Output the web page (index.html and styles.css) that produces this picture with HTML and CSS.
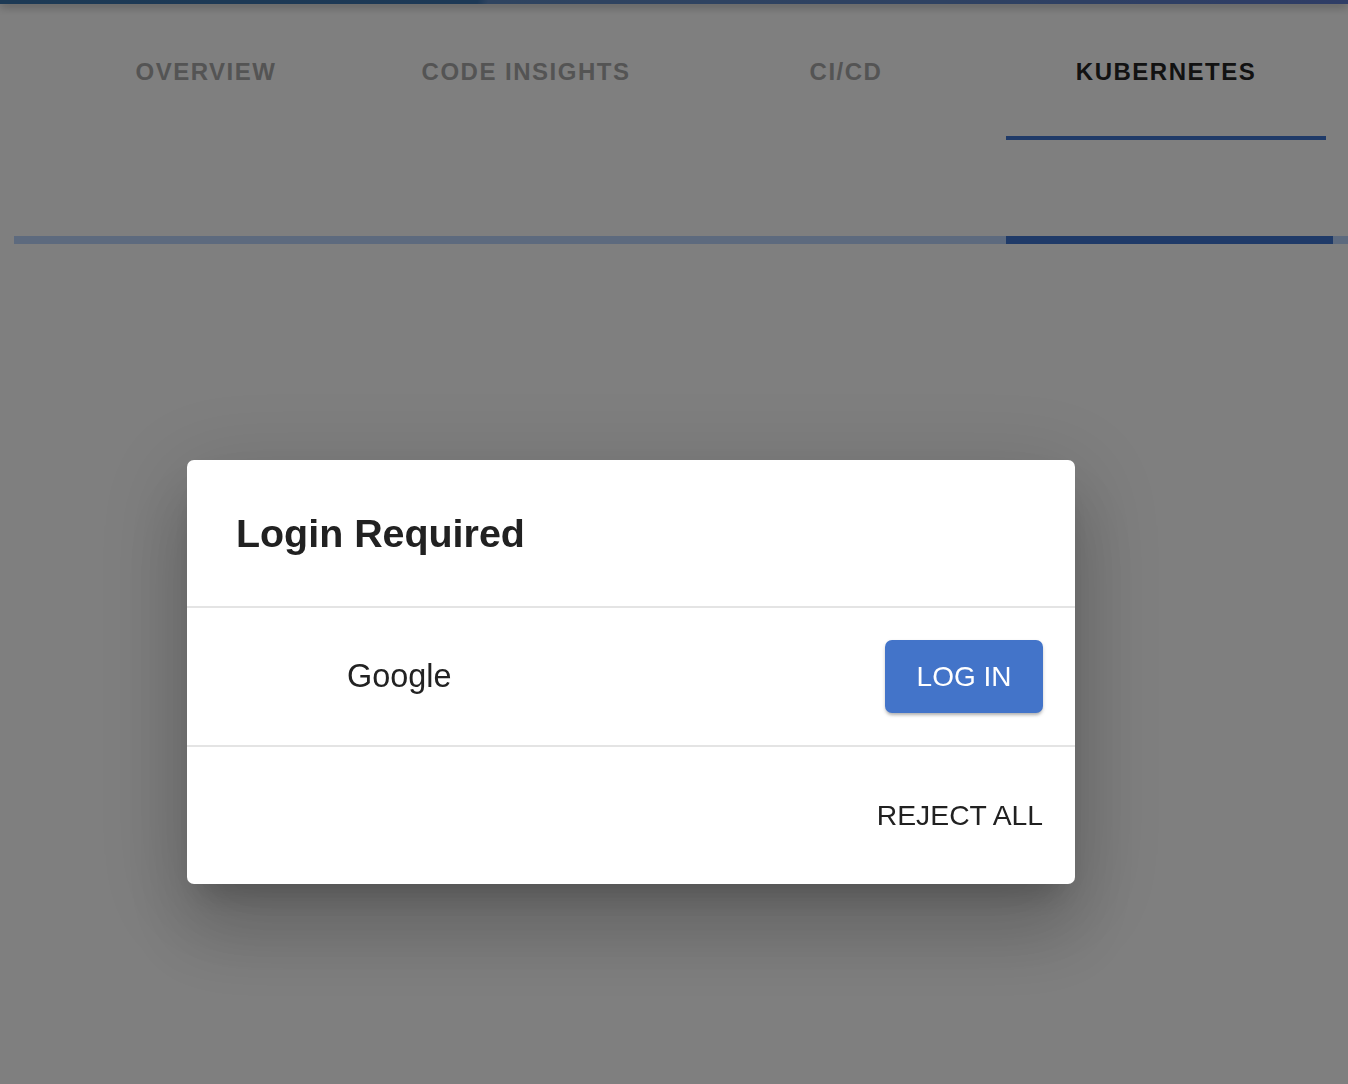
FILE: index.html
```html
<!DOCTYPE html>
<html lang="en">
<head>
<meta charset="utf-8">
<title>Login Required</title>
<link rel="stylesheet" href="styles.css">
</head>
<body>
<div class="page">
  <div class="topbar"></div>
  <nav class="tabs">
    <div class="tab">OVERVIEW</div>
    <div class="tab">CODE INSIGHTS</div>
    <div class="tab">CI/CD</div>
    <div class="tab active">KUBERNETES</div>
  </nav>
  <div class="progress">
    <div class="seg seg-a"></div>
    <div class="seg seg-dark"></div>
    <div class="seg seg-b"></div>
  </div>
</div>
<div class="overlay">
  <div class="dialog" role="dialog">
    <div class="dialog-title">Login Required</div>
    <div class="dialog-row">
      <span class="provider">Google</span>
      <button class="btn-primary">LOG IN</button>
    </div>
    <div class="dialog-actions">
      <button class="btn-text">REJECT ALL</button>
    </div>
  </div>
</div>
</body>
</html>
```

FILE: styles.css
```css
html, body {
  margin: 0;
  padding: 0;
  background: #ffffff;
  font-family: "Liberation Sans", Arial, sans-serif;
}

.page {
  height: 1084px;
  overflow: hidden;
}

.topbar {
  height: 4px;
  background: linear-gradient(100deg, #3a74aa 0%, #3a72ac 35.4%, #5e88c0 36.2%, #5e84c4 70%, #5e7acc 100%);
  box-shadow: 0 2px 10px rgba(0, 0, 0, 0.45);
  position: relative;
}

.tabs {
  display: flex;
  padding-left: 46px;
}

.tab {
  width: 320px;
  height: 128px;
  display: flex;
  align-items: center;
  justify-content: center;
  padding-top: 4px;
  box-sizing: content-box;
  border-bottom: 4px solid transparent;
  font-size: 24px;
  font-weight: 700;
  letter-spacing: 1.5px;
  color: #a9a9a9;
}

.tab.active {
  color: #252525;
  border-bottom-color: #3e74d0;
}

.progress {
  display: flex;
  height: 8px;
  margin-top: 96px;
  margin-left: 14px;
}

.seg-a {
  width: 992px;
  background: #bad4fc;
}

.seg-dark {
  width: 327px;
  background: #3e74d0;
}

.seg-b {
  flex: 1;
  background: #bad4fc;
}

.overlay {
  position: fixed;
  inset: 0;
  z-index: 10;
  background: rgba(0, 0, 0, 0.5);
  display: flex;
  align-items: flex-start;
  padding: 460px 0 0 187px;
}

.dialog {
  width: 888px;
  background: #ffffff;
  border-radius: 7px;
  box-shadow: 0 22px 30px -14px rgba(0, 0, 0, 0.2),
              0 48px 76px 6px rgba(0, 0, 0, 0.14),
              0 18px 92px 16px rgba(0, 0, 0, 0.12);
  color: #212121;
}

.dialog-title {
  padding: 50px 47px 49px 49px;
  font-size: 39.4px;
  line-height: 47px;
  font-weight: 700;
  border-bottom: 2px solid #e4e4e4;
}

.dialog-row {
  display: flex;
  align-items: center;
  justify-content: space-between;
  padding: 32px 32px 32px 160px;
  border-bottom: 2px solid #e4e4e4;
}

.provider {
  font-size: 32.4px;
  color: #222222;
}

.btn-primary,
.btn-text {
  font-family: "Liberation Sans", Arial, sans-serif;
  font-size: 28px;
  height: 73px;
  border: none;
  border-radius: 7px;
  padding: 0 31.5px;
  cursor: pointer;
}

.btn-primary {
  background: #4374c9;
  color: #ffffff;
  box-shadow: 0 3px 3px -1px rgba(0, 0, 0, 0.2), 0 2px 4px 0 rgba(0, 0, 0, 0.14);
}

.dialog-actions {
  display: flex;
  justify-content: flex-end;
  padding: 32px 32px 32px;
}

.btn-text {
  background: transparent;
  color: #212121;
  font-size: 28.3px;
  padding: 0;
}
```
